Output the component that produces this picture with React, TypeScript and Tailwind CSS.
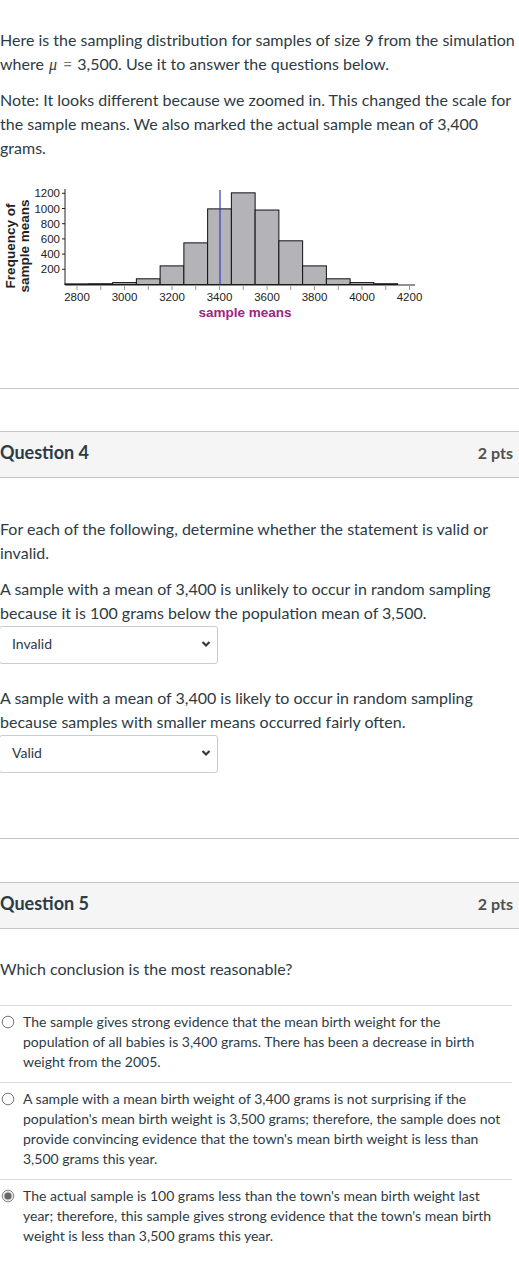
import React from "react";

const TEXT = "text-[#2d3b45]";

// histogram bins: centre value -> frequency
const BINS: [number, number][] = [
  [2800, 8],
  [2900, 10],
  [3000, 25],
  [3100, 75],
  [3200, 245],
  [3300, 548],
  [3400, 995],
  [3500, 1206],
  [3600, 980],
  [3700, 575],
  [3800, 245],
  [3900, 75],
  [4000, 25],
  [4100, 10],
];

const TOP = 175; // page y of the svg
const px = (v: number) => 77 + (v - 2800) * 0.2375;
const py = (f: number) => 283.5 - f * 0.076 - TOP;

function Histogram() {
  const xTicks = Array.from({ length: 15 }, (_, i) => 2800 + i * 100);
  const xLabels = [2800, 3000, 3200, 3400, 3600, 3800, 4000, 4200];
  const yLabels = [200, 400, 600, 800, 1000, 1200];
  return (
    <svg width="440" height="150" className="block" style={{ fontFamily: "'Liberation Sans', Arial, sans-serif" }}>
      {BINS.map(([c, f]) => (
        <rect
          key={c}
          x={px(c - 50)}
          y={py(f)}
          width={px(c + 50) - px(c - 50)}
          height={283.5 - TOP - py(f)}
          fill="#b4b4b8"
          stroke="#111"
          strokeWidth="1"
        />
      ))}
      <line x1="220" x2="220" y1={189 - TOP} y2={284 - TOP} stroke="#2a3fc0" strokeWidth="1.2" />
      <line x1="65" x2="65" y1={188 - TOP} y2={284 - TOP} stroke="#222" strokeWidth="1" />
      <line x1="65" x2="415" y1={284 - TOP} y2={284 - TOP} stroke="#222" strokeWidth="1" />
      {xTicks.map((v) => (
        <line key={v} x1={px(v)} x2={px(v)} y1={284 - TOP} y2={289 - TOP} stroke="#999" strokeWidth="1" />
      ))}
      {yLabels.map((v) => (
        <g key={v}>
          <line x1="62" x2="65" y1={py(v)} y2={py(v)} stroke="#222" strokeWidth="1" />
          <text x="60" y={py(v) + 4} textAnchor="end" fontSize="11.5" fill="#222">
            {v}
          </text>
        </g>
      ))}
      {xLabels.map((v) => (
        <text key={v} x={px(v)} y={300 - TOP} textAnchor="middle" fontSize="11.5" fill="#222">
          {v}
        </text>
      ))}
      <text x="245" y={316 - TOP} textAnchor="middle" fontSize="13.5" fontWeight="bold" fill="#a3237f">
        sample means
      </text>
      <g transform={`translate(15 ${245 - TOP}) rotate(-90)`}>
        <text x="0" y="0" textAnchor="middle" fontSize="13.5" fontWeight="bold" fill="#222">
          Frequency of
        </text>
        <text x="0" y="14" textAnchor="middle" fontSize="13.5" fontWeight="bold" fill="#222">
          sample means
        </text>
      </g>
    </svg>
  );
}

function QuestionHeader({ title }: { title: string }) {
  return (
    <div className="flex h-[47px] items-center justify-between border-y border-[#c4c4c4] bg-[#f5f5f5] pb-[4px] pr-[6px]">
      <h2 className={`text-[18px] font-bold ${TEXT}`}>{title}</h2>
      <span className="text-[16px] font-bold text-[#505050]">2 pts</span>
    </div>
  );
}

function Select({ value }: { value: string }) {
  return (
    <div className="-ml-px flex h-[38px] w-[219px] items-center justify-between rounded-[3px] border border-[#c7cdd1] bg-white pb-[2px] pl-[12px] pr-[6px]">
      <span className={`text-[14px] ${TEXT}`}>{value}</span>
      <svg width="10" height="8" viewBox="0 0 10 8">
        <polyline points="1.5,2 5,5.5 8.5,2" fill="none" stroke="#2d3b45" strokeWidth="2.2" />
      </svg>
    </div>
  );
}

function Radio({ checked }: { checked?: boolean }) {
  return (
    <svg width="14" height="14" viewBox="0 0 14 14" className="mt-[3px] shrink-0">
      <circle cx="7" cy="7" r="5.8" fill={checked ? "#e6e6e6" : "#fff"} stroke={checked ? "#8a8a8a" : "#777"} strokeWidth="1" />
      {checked ? <circle cx="7" cy="7" r="3.6" fill="#666" /> : null}
    </svg>
  );
}

const ANSWERS = [
  {
    text: "The sample gives strong evidence that the mean birth weight for the population of all babies is 3,400 grams. There has been a decrease in birth weight from the 2005.",
  },
  {
    text: "A sample with a mean birth weight of 3,400 grams is not surprising if the population's mean birth weight is 3,500 grams; therefore, the sample does not provide convincing evidence that the town's mean birth weight is less than 3,500 grams this year.",
  },
  {
    text: "The actual sample is 100 grams less than the town's mean birth weight last year; therefore, this sample gives strong evidence that the town's mean birth weight is less than 3,500 grams this year.",
    checked: true,
  },
];

export default function App() {
  return (
    <div className={`w-[519px] bg-white pb-[40px] ${TEXT}`} style={{ fontFamily: "Lato, 'Open Sans', sans-serif" }}>
      <div className="pr-[2px] pt-[28px] text-[16px] leading-[24px]">
        <p>
          Here is the sampling distribution for samples of size 9 from the simulation where{" "}
          <span className="mx-[1px] font-serif italic">μ</span>
          <span className="mx-[5px] text-[#777]">=</span>3,500. Use it to answer the questions below.
        </p>
        <p className="mt-[11px]">
          Note: It looks different because we zoomed in. This changed the scale for the sample means. We also marked the
          actual sample mean of 3,400 grams.
        </p>
      </div>

      <div className="mt-[16px]">
        <Histogram />
      </div>

      <div className="mt-[62px] h-px bg-[#c4c4c4]" />

      <div className="mt-[42px]">
        <QuestionHeader title="Question 4" />
      </div>
      <div className="text-[16px] leading-[24px]">
        <p className="mt-[39px] pr-[20px]">For each of the following, determine whether the statement is valid or invalid.</p>
        <p className="mt-[12px] pr-[20px]">
          A sample with a mean of 3,400 is unlikely to occur in random sampling because it is 100 grams below the
          population mean of 3,500.
        </p>
        <div className="mt-px">
          <Select value="Invalid" />
        </div>
        <p className="mt-[22px] pr-[20px]">
          A sample with a mean of 3,400 is likely to occur in random sampling because samples with smaller means occurred
          fairly often.
        </p>
        <div className="mt-px">
          <Select value="Valid" />
        </div>
      </div>

      <div className="mt-[65px] h-px bg-[#c4c4c4]" />

      <div className="mt-[43px]">
        <QuestionHeader title="Question 5" />
      </div>
      <p className="mt-[28px] text-[16px] leading-[24px]">Which conclusion is the most reasonable?</p>

      <ul className="mt-[24px] w-[512px]">
        {ANSWERS.map((a, i) => (
          <li key={i} className="flex gap-[8px] border-t border-[#dcdcdc] pb-[10px] pl-px pt-[6px] pr-[8px]">
            <Radio checked={a.checked} />
            <span className="text-[14px] leading-[20px]">{a.text}</span>
          </li>
        ))}
      </ul>
    </div>
  );
}
